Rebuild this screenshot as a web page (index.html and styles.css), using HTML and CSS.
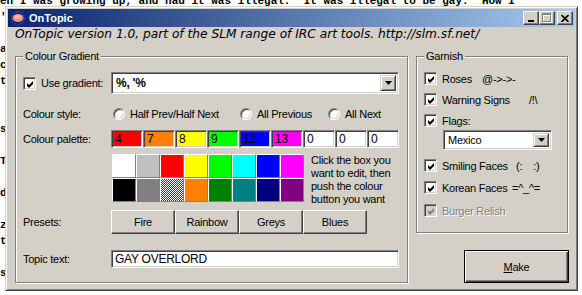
FILE: index.html
```html
<!DOCTYPE html>
<html lang="en">
<head>
    <meta charset="UTF-8">
    <title>OnTopic</title>
    <link rel="stylesheet" href="styles.css">
</head>
<body>

    <div class="backdrop-top">en I was growing up, and had it was illegal.  It was illegal to be gay.  How I</div>
    <pre class="backdrop-left">'

a
c
t


s

T

d

z
t

s</pre>

    <div class="window">
        <div class="titlebar">
            <svg class="app-icon" width="16" height="16" viewBox="0 0 16 16">
                <circle cx="8" cy="8" r="6.5" fill="none" stroke="#1f4fd8" stroke-width="1.2" stroke-dasharray="2 1"/>
                <ellipse cx="8" cy="8" rx="5.5" ry="4" fill="#f4907c"/>
                <ellipse cx="8" cy="7" rx="3.5" ry="2" fill="#f8b4a4"/>
            </svg>
            <span class="title">OnTopic</span>
            <div class="title-buttons">
                <span class="tbtn">
                    <svg width="8" height="7" viewBox="0 0 8 7"><rect x="1" y="5" width="6" height="2" fill="#000"/></svg>
                </span>
                <span class="tbtn">
                    <svg width="10" height="10" viewBox="0 0 10 10" shape-rendering="crispEdges">
                        <rect x="1.5" y="1.5" width="8" height="8" fill="none" stroke="#fff"/>
                        <rect x="1" y="2" width="8" height="1" fill="#fff"/>
                        <rect x="0.5" y="0.5" width="8" height="8" fill="none" stroke="#808080"/>
                        <rect x="0" y="1" width="9" height="1" fill="#808080"/>
                    </svg>
                </span>
                <span class="tbtn close">
                    <svg width="8" height="7" viewBox="0 0 8 7"><path d="M0.5 0 L7.5 7 M7.5 0 L0.5 7" stroke="#000" stroke-width="1.6"/></svg>
                </span>
            </div>
        </div>

        <div class="client">
            <p class="about">OnTopic version 1.0, part of the SLM range of IRC art tools. http://slm.sf.net/</p>

            <div class="panels">
                <fieldset class="group gradient">
                    <legend>Colour Gradient</legend>

                    <div class="row row-use">
                        <span class="lbl">
                            <span class="check"><svg width="7" height="7" viewBox="0 0 7 7"><polygon points="0,2 2,4 6,0 6,3 2,7 0,5" fill="#000"/></svg></span>
                            Use gradient:
                        </span>
                        <div class="combo combo-wide">
                            <span class="combo-text strong">%, '%</span>
                            <span class="drop"><svg width="7" height="4" viewBox="0 0 7 4"><polygon points="0,0 7,0 3.5,4" fill="#000"/></svg></span>
                        </div>
                    </div>

                    <div class="row row-style">
                        <span class="lbl">Colour style:</span>
                        <div class="radios">
                            <span class="radio-opt"><span class="radio"></span>Half Prev/Half Next</span>
                            <span class="radio-opt"><span class="radio"></span>All Previous</span>
                            <span class="radio-opt"><span class="radio"></span>All Next</span>
                        </div>
                    </div>

                    <div class="row row-palette">
                        <span class="lbl">Colour palette:</span>
                        <div class="palette">
                            <span class="slot c-red">4</span>
                            <span class="slot c-orange">7</span>
                            <span class="slot c-yellow">8</span>
                            <span class="slot c-lime">9</span>
                            <span class="slot c-blue">12</span>
                            <span class="slot c-magenta">13</span>
                            <span class="slot">0</span>
                            <span class="slot">0</span>
                            <span class="slot">0</span>
                        </div>
                    </div>

                    <div class="row row-swatches">
                        <span class="lbl"></span>
                        <div class="swatches">
                            <span class="sw c-white"></span>
                            <span class="sw c-silver"></span>
                            <span class="sw c-red"></span>
                            <span class="sw c-yellow"></span>
                            <span class="sw c-lime"></span>
                            <span class="sw c-cyan"></span>
                            <span class="sw c-blue"></span>
                            <span class="sw c-magenta"></span>
                            <span class="sw c-black"></span>
                            <span class="sw c-grey"></span>
                            <span class="sw c-maroon"></span>
                            <span class="sw c-orange"></span>
                            <span class="sw c-green"></span>
                            <span class="sw c-teal"></span>
                            <span class="sw c-navy"></span>
                            <span class="sw c-purple"></span>
                        </div>
                        <p class="hint">Click the box you want to edit, then push the colour button you want</p>
                    </div>

                    <div class="row row-presets">
                        <span class="lbl">Presets:</span>
                        <div class="presets">
                            <span class="btn">Fire</span>
                            <span class="btn">Rainbow</span>
                            <span class="btn">Greys</span>
                            <span class="btn">Blues</span>
                        </div>
                    </div>

                    <div class="row row-topic">
                        <span class="lbl">Topic text:</span>
                        <div class="edit">GAY OVERLORD</div>
                    </div>
                </fieldset>

                <div class="side">
                    <fieldset class="group garnish">
                        <legend>Garnish</legend>

                        <div class="opt opt-roses">
                            <span class="check"><svg width="7" height="7" viewBox="0 0 7 7"><polygon points="0,2 2,4 6,0 6,3 2,7 0,5" fill="#000"/></svg></span>
                            <span class="name w-roses">Roses</span><span class="sample">@-&gt;-&gt;-</span>
                        </div>
                        <div class="opt opt-warn">
                            <span class="check"><svg width="7" height="7" viewBox="0 0 7 7"><polygon points="0,2 2,4 6,0 6,3 2,7 0,5" fill="#000"/></svg></span>
                            <span class="name w-warn">Warning Signs</span><span class="sample">/!\</span>
                        </div>
                        <div class="opt opt-flags">
                            <span class="check"><svg width="7" height="7" viewBox="0 0 7 7"><polygon points="0,2 2,4 6,0 6,3 2,7 0,5" fill="#000"/></svg></span>
                            <span class="name">Flags:</span>
                        </div>
                        <div class="combo combo-flag">
                            <span class="combo-text">Mexico</span>
                            <span class="drop"><svg width="7" height="4" viewBox="0 0 7 4"><polygon points="0,0 7,0 3.5,4" fill="#000"/></svg></span>
                        </div>
                        <div class="opt opt-smile">
                            <span class="check"><svg width="7" height="7" viewBox="0 0 7 7"><polygon points="0,2 2,4 6,0 6,3 2,7 0,5" fill="#000"/></svg></span>
                            <span class="name w-smile">Smiling Faces</span><span class="sample">(:</span><span class="sample sample-far">:)</span>
                        </div>
                        <div class="opt opt-korean">
                            <span class="check"><svg width="7" height="7" viewBox="0 0 7 7"><polygon points="0,2 2,4 6,0 6,3 2,7 0,5" fill="#000"/></svg></span>
                            <span class="name w-korean">Korean Faces</span><span class="sample">=^_^=</span>
                        </div>
                        <div class="opt opt-burger disabled">
                            <span class="check"><svg width="7" height="7" viewBox="0 0 7 7"><polygon points="0,2 2,4 6,0 6,3 2,7 0,5" fill="#808080"/></svg></span>
                            <span class="name">Burger Relish</span>
                        </div>
                    </fieldset>

                    <span class="btn btn-make"><u>M</u>ake</span>
                </div>
            </div>
        </div>
    </div>

</body>
</html>
```

FILE: styles.css
```css
/* page behind the dialog */
* {
    box-sizing: border-box;
}

body {
    margin: 0;
    width: 582px;
    height: 295px;
    overflow: hidden;
    position: relative;
    display: flow-root;
    background: #fff;
    color: #000;
    font-family: "Liberation Sans", Arial, sans-serif;
    font-size: 11px;
    letter-spacing: -0.25px;
}

.backdrop-top,
.backdrop-left {
    font: bold 11px/16px "Liberation Mono", monospace;
    letter-spacing: 0;
    white-space: pre;
}

.backdrop-top {
    margin-top: -7px;
}

.backdrop-left {
    margin: 0;
    width: 6px;
    overflow: hidden;
}

/* the dialog window */
.window {
    position: absolute;
    left: 5px;
    top: 6px;
    width: 573px;
    height: 285px;
    padding: 2px;
    background: #d4d0c8;
    border: 1px solid;
    border-color: #d4d0c8 #404040 #404040 #d4d0c8;
    box-shadow: inset 1px 1px #fff, inset -1px -1px #808080;
}

.titlebar {
    display: flex;
    align-items: center;
    height: 18px;
    padding-left: 2px;
    background: linear-gradient(to right, #0a246a, #a6caf0);
}

.app-icon {
    margin-right: 3px;
}

.title {
    color: #fff;
    font-weight: bold;
    font-size: 11px;
    letter-spacing: 0;
}

.title-buttons {
    display: flex;
    margin-left: auto;
    margin-right: 2px;
}

.tbtn {
    width: 16px;
    height: 14px;
    display: flex;
    align-items: center;
    justify-content: center;
    background: #d4d0c8;
    border: 1px solid;
    border-color: #fff #404040 #404040 #fff;
    box-shadow: inset -1px -1px #808080;
}

.tbtn.close {
    margin-left: 2px;
}

/* client area */
.client {
    padding: 0 7px;
}

.about {
    margin: 0;
    height: 14px;
    line-height: 14px;
    font-family: "DejaVu Sans", Verdana, sans-serif;
    font-style: italic;
    font-size: 12.2px;
    letter-spacing: 0;
}

.panels {
    display: flex;
    gap: 8px;
    margin-top: 9px;
}

/* group boxes */
.group {
    margin: 0;
    min-width: 0;
    border: 1px solid #808080;
    box-shadow: inset 1px 1px #fff, 1px 1px #fff;
    padding: 9px 8px 13px 7px;
}

.group legend {
    padding: 0 2px;
    line-height: 13px;
    background: #d4d0c8;
}

.gradient {
    width: 393px;
}

.row {
    display: flex;
    align-items: center;
}

.lbl {
    width: 88px;
    flex-shrink: 0;
    display: flex;
    align-items: center;
    align-self: center;
}

.row-use { height: 22px; }
.row-style { height: 19px; margin-top: 10px; }
.row-palette { height: 18px; margin-top: 7px; }
.row-swatches { height: 48px; margin-top: 6px; align-items: flex-start; }
.row-presets { height: 24px; margin-top: 8px; }
.row-topic { height: 18px; margin-top: 16px; }

/* checkbox, radio */
.check {
    width: 13px;
    height: 13px;
    flex-shrink: 0;
    padding: 2px;
    margin-right: 5px;
    background: #fff;
    border: 1px solid;
    border-color: #808080 #fff #fff #808080;
    box-shadow: inset 1px 1px #404040, inset -1px -1px #d4d0c8;
}

.check svg {
    display: block;
    margin: 1px 0 0 1px;
}

.radios {
    display: grid;
    grid-template-columns: 127px 88px auto;
    padding-left: 2px;
}

.radio-opt {
    display: flex;
    align-items: center;
}

.radio {
    width: 12px;
    height: 12px;
    margin-right: 5px;
    border-radius: 50%;
    background: #fff;
    border: 1px solid;
    border-color: #808080 #fff #fff #808080;
    box-shadow: inset 1px 1px #404040, inset -1px -1px #d4d0c8;
}

/* combo and edit boxes */
.combo,
.edit,
.slot {
    background: #fff;
    border: 1px solid;
    border-color: #808080 #fff #fff #808080;
    box-shadow: inset 1px 1px #404040, inset -1px -1px #d4d0c8;
}

.combo {
    display: flex;
    align-items: center;
    padding: 2px;
}

.combo-wide {
    width: 288px;
    height: 22px;
}

.combo-text {
    flex: 1;
    padding-left: 2px;
    font-size: 11px;
}

.combo-text.strong {
    font-weight: bold;
    font-size: 12px;
}

.drop {
    width: 16px;
    height: 100%;
    display: flex;
    align-items: center;
    justify-content: center;
    background: #d4d0c8;
    border: 1px solid;
    border-color: #d4d0c8 #404040 #404040 #d4d0c8;
    box-shadow: inset 1px 1px #fff, inset -1px -1px #808080;
}

.edit {
    width: 288px;
    height: 18px;
    padding-left: 3px;
    font-size: 12px;
    line-height: 16px;
}

/* palette */
.palette {
    display: flex;
}

.slot {
    width: 32px;
    height: 18px;
    padding-left: 3px;
    font-size: 12px;
    line-height: 17px;
}

.c-red { background: #ff0000; }
.c-orange { background: #ff8000; }
.c-yellow { background: #ffff00; }
.c-lime { background: #00ff00; }
.c-blue { background: #0000ff; }
.c-magenta { background: #ff00ff; }
.c-white { background: #fff; }
.c-silver { background: #c0c0c0; }
.c-cyan { background: #00ffff; }
.c-black { background: #000; }
.c-grey { background: #808080; }
.c-green { background: #008000; }
.c-teal { background: #008080; }
.c-navy { background: #000080; }
.c-purple { background: #800080; }
.c-maroon { background: repeating-conic-gradient(#c00000 0 25%, #fff 0 50%) 0 0 / 2px 2px; }

.swatches {
    display: grid;
    grid-template-columns: repeat(8, 24px);
    grid-auto-rows: 24px;
    margin-left: 1px;
}

.sw {
    border: 1px solid;
    border-color: #fff #808080 #808080 #fff;
}

.hint {
    margin: 0 0 0 7px;
    line-height: 13px;
    font-size: 11px;
}

/* buttons */
.presets {
    display: flex;
}

.btn {
    display: flex;
    align-items: center;
    justify-content: center;
    background: #d4d0c8;
    border: 1px solid;
    border-color: #fff #404040 #404040 #fff;
    box-shadow: inset -1px -1px #808080;
}

.presets .btn {
    width: 64px;
    height: 24px;
}

/* right column */
.side {
    display: flex;
    flex-direction: column;
    width: 152px;
}

.garnish {
    width: 152px;
    padding-bottom: 15px;
}

.opt {
    display: flex;
    align-items: center;
    height: 13px;
    white-space: pre;
}

.opt-warn,
.opt-flags { margin-top: 8px; }
.opt-smile,
.opt-korean { margin-top: 9px; }
.opt-burger { margin-top: 10px; }

.w-roses { width: 40px; }
.w-warn { width: 87px; }
.w-smile { width: 74px; }
.w-korean { width: 70px; }

.sample-far {
    margin-left: 11px;
}

.combo-flag {
    width: 109px;
    height: 20px;
    margin: 3px 0 0 19px;
}

.disabled .check {
    background: #d4d0c8;
}

.disabled .name {
    color: #808080;
    text-shadow: 1px 1px #fff;
}

.btn-make {
    align-self: flex-end;
    width: 105px;
    height: 33px;
    margin: 17px -1px 0 0;
    border: 1px solid #000;
    box-shadow: inset 1px 1px #fff, inset -1px -1px #404040, inset -2px -2px #808080;
}
```
